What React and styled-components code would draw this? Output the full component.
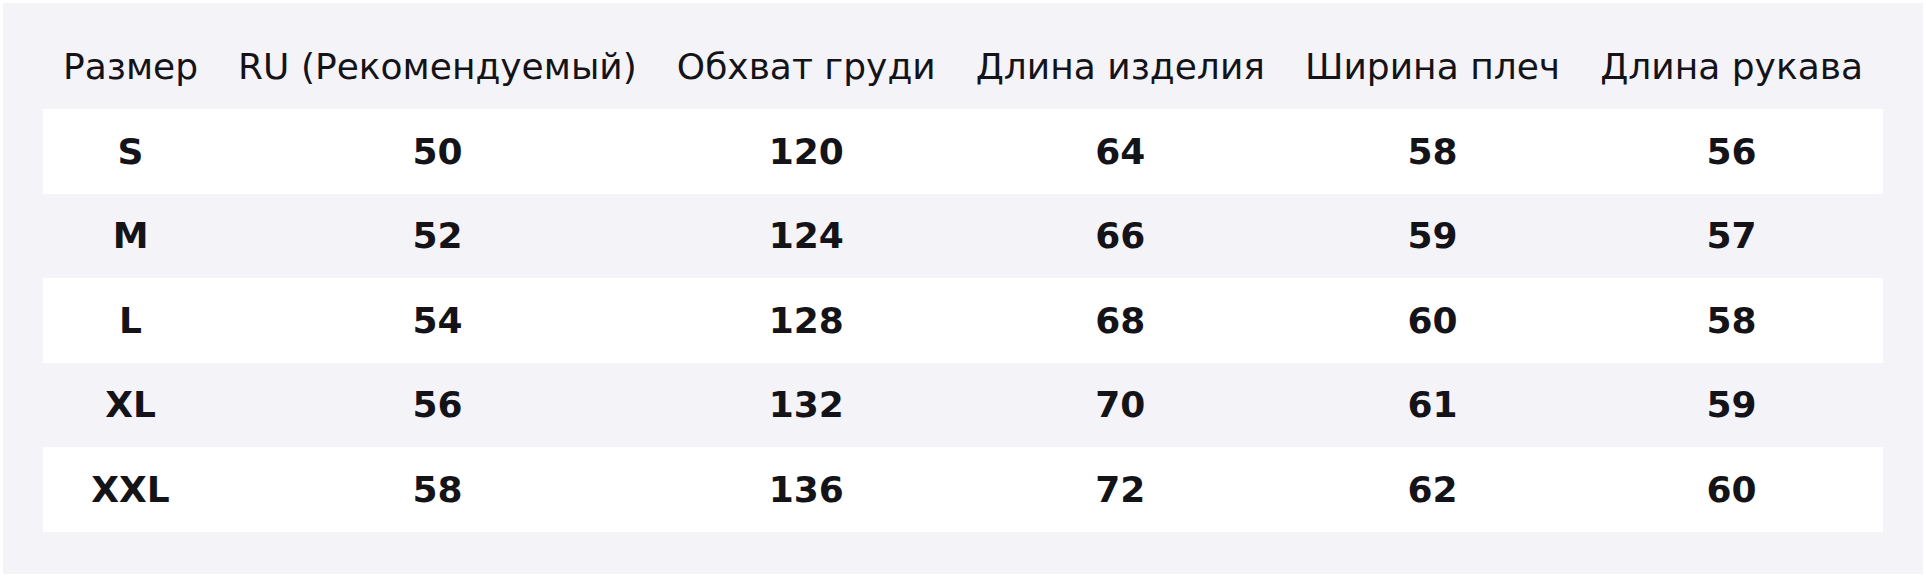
import React from 'react';
import styled, { createGlobalStyle } from 'styled-components';

const GlobalStyle = createGlobalStyle`
  body {
    margin: 3px;
    background: #ffffff;
    font-family: 'DejaVu Sans', 'Liberation Sans', sans-serif;
  }
`;

const columns = [
  'Размер',
  'RU (Рекомендуемый)',
  'Обхват груди',
  'Длина изделия',
  'Ширина плеч',
  'Длина рукава',
];

const rows = [
  ['S', 50, 120, 64, 58, 56],
  ['M', 52, 124, 66, 59, 57],
  ['L', 54, 128, 68, 60, 58],
  ['XL', 56, 132, 70, 61, 59],
  ['XXL', 58, 136, 72, 62, 60],
];

function SizeChart() {
  return (
    <Panel>
      <Table>
        <thead>
          <tr>
            {columns.map((title) => (
              <HeadCell key={title}>{title}</HeadCell>
            ))}
          </tr>
        </thead>
        <tbody>
          {rows.map((row) => (
            <Row key={row[0]}>
              {row.map((value, i) => (
                <Cell key={i}>{value}</Cell>
              ))}
            </Row>
          ))}
        </tbody>
      </Table>
    </Panel>
  );
}

export default function App() {
  return (
    <>
      <GlobalStyle />
      <SizeChart />
    </>
  );
}

const Panel = styled.div`
  background: #f4f3f8;
  padding: 40px 40px 42px;
`;

const Table = styled.table`
  width: 100%;
  border-collapse: collapse;
  border-spacing: 0;
  color: #141418;
`;

const HeadCell = styled.th`
  font-size: 36px;
  font-weight: 400;
  text-align: center;
  white-space: nowrap;
  padding: 3px 20px 22px;
`;

const Row = styled.tr`
  &:nth-child(odd) {
    background: #ffffff;
  }
`;

const Cell = styled.td`
  height: 84.5px;
  box-sizing: border-box;
  padding: 0 20px;
  font-size: 36px;
  font-weight: 700;
  text-align: center;
  vertical-align: middle;
`;
